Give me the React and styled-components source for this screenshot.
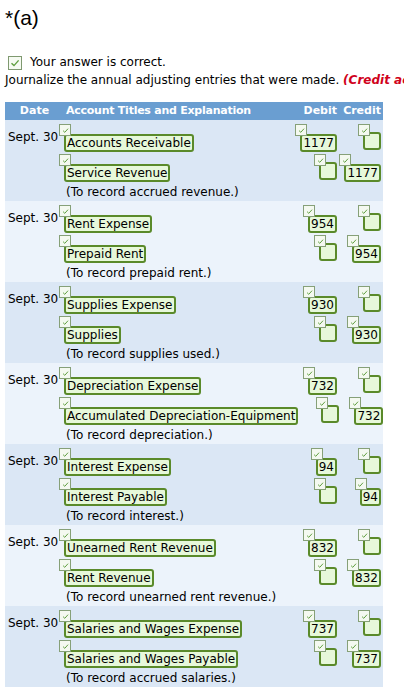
import React from 'react';
import styled, { createGlobalStyle } from 'styled-components';

const GlobalStyle = createGlobalStyle`
   html, body {
      margin: 0;
      padding: 0;
      background: #ffffff;
      overflow: hidden;
   }
   body {
      font-family: "DejaVu Sans", Verdana, sans-serif;
      color: #000;
   }
`;

const Page = styled.div`
   padding: 7px 5px 0 5px;
   width: 394px;
   white-space: nowrap;
`;

const Title = styled.div`
   font-family: "Liberation Sans", Arial, sans-serif;
   font-size: 21px;
   line-height: 22px;
   height: 22px;
`;

const Status = styled.div`
   display: flex;
   align-items: center;
   gap: 8px;
   margin-top: 26px;
   padding-left: 3px;
   font-size: 12px;
   line-height: 15px;
`;

const BigCheck = styled.span`
   display: inline-flex;
   align-items: center;
   justify-content: center;
   width: 12px;
   height: 12px;
   border: 1px solid #7f9970;
   background: #f6fbf2;
`;

const Prompt = styled.div`
   font-size: 12px;
   line-height: 16px;
   margin-top: 2px;
`;

const Hint = styled.span`
   color: #d0021b;
   font-weight: bold;
   font-style: italic;
`;

const Table = styled.div`
   margin-top: 14px;
   width: 378px;
`;

const Line = styled.div`
   display: grid;
   grid-template-columns: 59px 1fr 44px 43px;
   height: ${p => p.h || 18}px;
   margin-bottom: ${p => p.mb || 0}px;
`;

const Header = styled(Line)`
   background: #6a9ed1;
   color: #fff;
   font-weight: bold;
   font-size: 11px;
   line-height: 18px;
`;

const HeadCell = styled.div`
   text-align: ${p => p.align || 'left'};
   padding: ${p => p.pad || '0'};
   letter-spacing: ${p => p.tight ? '-0.25px' : '0'};
`;

const Block = styled.div`
   display: flex;
   flex-direction: column;
   background: ${p => (p.dark ? '#dbe7f5' : '#ecf3fb')};
   padding: 12px 0 2px 0;
`;

const DateCell = styled.div`
   font-size: 12px;
   line-height: 14px;
   padding: 0 0 0 3px;
   margin-top: -2px;
`;

const Cell = styled.div`
   display: flex;
   justify-content: ${p => (p.right ? 'flex-end' : 'flex-start')};
   padding-right: ${p => p.pr || 0}px;
`;

const Note = styled.div`
   font-size: 12px;
   line-height: 14px;
   margin-top: 5px;
   padding-left: 61px;
`;

const Wrap = styled.span`
   position: relative;
   display: inline-block;
`;

const Input = styled.span`
   display: inline-block;
   box-sizing: border-box;
   min-width: 18px;
   height: 18px;
   padding: 0 1px 0 1px;
   border: 2px solid #5a8a2a;
   border-radius: 3px;
   background: #e7f8da;
   font-size: 12px;
   line-height: 15px;
`;

const Check = styled.span`
   position: absolute;
   left: -5px;
   top: -8px;
   width: 10px;
   height: 10px;
   border: 1px solid #86a078;
   background: #f4f9f0;
   display: flex;
   align-items: center;
   justify-content: center;
`;

const Tick = ({ size = 7 }) => (
   <svg width={size} height={size} viewBox="0 0 10 10">
      <path d="M1.5 5.2 L4 7.6 L8.6 2.4" fill="none" stroke="#5e9e3e" strokeWidth="1.4" />
   </svg>
);

const Field = ({ value }) => (
   <Wrap>
      <Input>{value}</Input>
      <Check><Tick /></Check>
   </Wrap>
);

const entries = [
   ['Accounts Receivable', 'Service Revenue', '1177', '(To record accrued revenue.)'],
   ['Rent Expense', 'Prepaid Rent', '954', '(To record prepaid rent.)'],
   ['Supplies Expense', 'Supplies', '930', '(To record supplies used.)'],
   ['Depreciation Expense', 'Accumulated Depreciation-Equipment', '732', '(To record depreciation.)'],
   ['Interest Expense', 'Interest Payable', '94', '(To record interest.)'],
   ['Unearned Rent Revenue', 'Rent Revenue', '832', '(To record unearned rent revenue.)'],
   ['Salaries and Wages Expense', 'Salaries and Wages Payable', '737', '(To record accrued salaries.)'],
];

export default function App() {
   return (
      <Page>
         <GlobalStyle />
         <Title>*(a)</Title>
         <Status>
            <BigCheck><Tick size={10} /></BigCheck>
            Your answer is correct.
         </Status>
         <Prompt>
            Journalize the annual adjusting entries that were made. <Hint>(Credit account titles are automatically indented)</Hint>
         </Prompt>

         <Table>
            <Header>
               <HeadCell align="center">Date</HeadCell>
               <HeadCell tight pad="0 0 0 2px">Account Titles and Explanation</HeadCell>
               <HeadCell align="right" pad="0 3px 0 0">Debit</HeadCell>
               <HeadCell align="right" pad="0 2px 0 0">Credit</HeadCell>
            </Header>

            {entries.map(([dr, cr, amt, note], i) => (
               <Block key={dr} dark={i % 2 === 0}>
                  <Line mb={12}>
                     <DateCell>Sept. 30</DateCell>
                     <Cell><Field value={dr} /></Cell>
                     <Cell right pr={3}><Field value={amt} /></Cell>
                     <Cell right pr={2}><Field value="" /></Cell>
                  </Line>
                  <Line>
                     <div />
                     <Cell><Field value={cr} /></Cell>
                     <Cell right pr={3}><Field value="" /></Cell>
                     <Cell right pr={2}><Field value={amt} /></Cell>
                  </Line>
                  <Note>{note}</Note>
               </Block>
            ))}
         </Table>
      </Page>
   );
}
